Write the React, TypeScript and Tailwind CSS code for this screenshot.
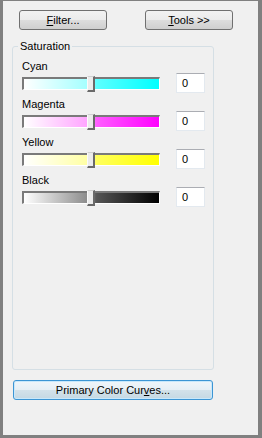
import React from "react";

const sliders = [
  {
    name: "Cyan",
    grad: "bg-[linear-gradient(to_right,#ffffff,#a4ffff_47%,#5cffff_54%,#00ffff)]",
  },
  {
    name: "Magenta",
    grad: "bg-[linear-gradient(to_right,#ffffff,#ffa4ff_47%,#ff5cff_54%,#ff00ff)]",
  },
  {
    name: "Yellow",
    grad: "bg-[linear-gradient(to_right,#ffffff,#ffffa4_47%,#ffff5c_54%,#ffff00)]",
  },
  {
    name: "Black",
    grad: "bg-[linear-gradient(to_right,#ffffff,#8c8c8c_47%,#555555_54%,#000000)]",
  },
];

function SliderRow({ name, grad }: { name: string; grad: string }) {
  return (
    <div className="flex flex-col">
      <div className="h-[13px] leading-[13px] text-[11px] text-black">{name}</div>
      <div className="flex items-center h-[20px]">
        <div
          className={`relative w-[138px] h-[13px] border-t-2 border-l-2 border-b border-r border-t-[#7a7a7a] border-l-[#7a7a7a] border-b-white border-r-white ${grad}`}
        >
          <div className="absolute left-[63px] top-[-3px] w-[8px] h-[16px] bg-[#ebebeb] border-l border-t border-l-[#fafafa] border-t-[#d0d0d0] border-r-2 border-b-2 border-r-[#6a6a6a] border-b-[#6a6a6a]" />
        </div>
        <div className="ml-[16px] w-[29px] h-[20px] bg-white border border-[#e3e9ef] border-t-[#abadb3] flex items-center pl-[5px] text-[11px] text-black">
          0
        </div>
      </div>
    </div>
  );
}

export default function App() {
  return (
    <div
      className="w-[262px] h-[438px] bg-[#f0f0f0] border-l-[3px] border-t border-r-[4px] border-b-[3px] border-[#808080] flex flex-col"
      style={{ fontFamily: '"Liberation Sans", Arial, sans-serif' }}
    >
      <div className="flex mt-[9px] ml-[16px] gap-[38px]">
        <button className="w-[88px] h-[20px] rounded-[3px] border border-[#707070] bg-[linear-gradient(to_bottom,#f2f2f2,#ebebeb_50%,#dddddd_50%,#cfcfcf)] text-[11px] text-black leading-none">
          <span className="underline underline-offset-1">F</span>ilter...
        </button>
        <button className="w-[88px] h-[20px] rounded-[3px] border border-[#707070] bg-[linear-gradient(to_bottom,#f2f2f2,#ebebeb_50%,#dddddd_50%,#cfcfcf)] text-[11px] text-black leading-none">
          <span className="underline underline-offset-1">T</span>ools &gt;&gt;
        </button>
      </div>

      <div className="relative mt-[16px] ml-[9px] w-[202px] h-[324px] border border-[#d5dfe5] rounded-[3px] pt-[13px] pl-[9px] flex flex-col gap-[5px]">
        <div className="absolute left-[5px] top-[-7px] px-[2px] bg-[#f0f0f0] text-[11px] leading-[13px] text-black">
          Saturation
        </div>
        {sliders.map((s) => (
          <SliderRow key={s.name} name={s.name} grad={s.grad} />
        ))}
      </div>

      <button className="mt-[10px] ml-[10px] w-[200px] h-[20px] rounded-[3px] border border-[#3c95d4] bg-[linear-gradient(to_bottom,#f0f6fa,#e6eff5_50%,#d3e2ea_50%,#c5d8e3)] shadow-[inset_0_0_0_1px_#c8e8fb] text-[11px] text-black leading-none">
        Primary Color Cur<span className="underline underline-offset-1">v</span>es...
      </button>
    </div>
  );
}
